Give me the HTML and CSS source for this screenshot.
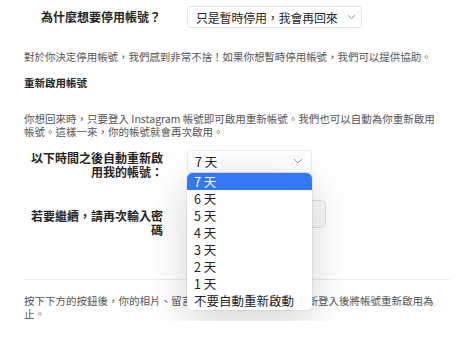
FILE: index.html
```html
<!DOCTYPE html>
<html lang="zh-TW">
<head>
    <meta charset="utf-8">
    <title>停用帳號</title>
    <link rel="stylesheet" href="styles.css">
</head>
<body>

<div class="deactivate">

    <div class="deactivate-row deactivate-row-reason">
        <label class="deactivate-label">為什麼想要停用帳號？</label>
        <div class="deactivate-select deactivate-select-reason">
            <span>只是暫時停用，我會再回來</span>
            <svg class="deactivate-chevron" width="9" height="6" viewBox="0 0 9 6"><path d="M1 1.2l3.5 3.4L8 1.2" fill="none" stroke="#8e8e8e" stroke-width="1"/></svg>
        </div>
    </div>

    <p class="deactivate-text deactivate-sorry">對於你決定停用帳號，我們感到非常不捨！如果你想暫時停用帳號，我們可以提供協助。</p>

    <h3 class="deactivate-heading">重新啟用帳號</h3>

    <p class="deactivate-text deactivate-info">你想回來時，只要登入 Instagram 帳號即可啟用重新帳號。我們也可以自動為你重新啟用帳號。這樣一來，你的帳號就會再次啟用。</p>

    <div class="deactivate-row deactivate-row-days">
        <label class="deactivate-label">以下時間之後自動重新啟用我的帳號：</label>
        <div class="deactivate-select deactivate-select-days">
            <span>7 天</span>
            <svg class="deactivate-chevron" width="10" height="6" viewBox="0 0 10 6"><path d="M1 1l4 4 4-4" fill="none" stroke="#9a9a9a" stroke-width="1"/></svg>

            <ul class="deactivate-menu">
                <li class="deactivate-menu-selected">7 天</li>
                <li>6 天</li>
                <li>5 天</li>
                <li>4 天</li>
                <li>3 天</li>
                <li>2 天</li>
                <li>1 天</li>
                <li>不要自動重新啟動</li>
            </ul>
        </div>
    </div>

    <div class="deactivate-row deactivate-row-password">
        <label class="deactivate-label">若要繼續，請再次輸入密碼</label>
        <div class="deactivate-password"></div>
    </div>

    <hr class="deactivate-rule" />

    <p class="deactivate-text deactivate-footer">按下下方的按鈕後，你的相片、留言和讚都將隱藏，直到你重新登入後將帳號重新啟用為止。</p>

</div>

</body>
</html>
```

FILE: styles.css
```css
body {
    margin:0;
    background:#fff;
    font-family:"Noto Sans CJK TC","Noto Sans",sans-serif;
    color:#262626;
}

/* deactivate form */
.deactivate {
    padding:6px 24px 0 24px;
}

.deactivate-row {
    display:grid;
    grid-template-columns:139px auto;
    column-gap:24px;
    align-items:start;
}

.deactivate-label {
    font-size:12px;
    font-weight:bold;
    line-height:14px;
    text-align:right;
    color:#262626;
}

.deactivate-row-reason .deactivate-label {
    line-height:16px;
    padding-top:3px;
    padding-right:2px;
    white-space:nowrap;
}

.deactivate-row-days .deactivate-label {
    padding-top:1px;
}

.deactivate-row-password {
    margin-top:21px;
}

.deactivate-row-password .deactivate-label {
    padding-top:9px;
}

.deactivate-select {
    position:relative;
    display:flex;
    align-items:center;
    justify-content:space-between;
    box-sizing:border-box;
    border:1px solid #e4e4e4;
    border-radius:3px;
    background:#fff;
    font-size:12px;
    color:#262626;
}

.deactivate-select-reason {
    width:175px;
    height:22px;
    padding:0 5px 0 8px;
}

.deactivate-select-reason span {
    font-size:12px;
    letter-spacing:-0.2px;
}

.deactivate-select-days {
    width:125px;
    height:23px;
    padding:0 8px 0 7px;
    border-color:#ebebeb;
    font-size:12.5px;
}

.deactivate-chevron {
    display:block;
    flex:none;
}

.deactivate-text {
    margin:0;
    font-size:10.5px;
    line-height:13.5px;
    color:#555;
}

.deactivate-sorry {
    margin-top:22px;
    letter-spacing:-0.05px;
}

.deactivate-heading {
    margin:12px 0 0 0;
    font-size:10.5px;
    line-height:14px;
    font-weight:bold;
    color:#262626;
}

.deactivate-info {
    margin-top:22px;
    padding-right:14px;
}

.deactivate-row-days {
    margin-top:11px;
}

.deactivate-password {
    width:139px;
    height:28px;
    box-sizing:border-box;
    border:1px solid #e2e2e2;
    border-radius:5px;
    background:#fafafa;
}

.deactivate-rule {
    margin:42px 0 0 0;
    border:0;
    border-top:1px solid #eee;
}

.deactivate-footer {
    margin-top:14px;
    padding-right:8px;
}

/* opened select menu */
.deactivate-menu {
    position:absolute;
    top:22px;
    left:-1px;
    z-index:50;
    width:125px;
    margin:0;
    padding:0 0 1px 0;
    list-style:none;
    background:#fff;
    border-radius:5px;
    box-shadow:0 10px 40px rgba(0,0,0,.18), 0 0 0 1px rgba(0,0,0,.05);
    overflow:hidden;
}

.deactivate-menu li {
    height:17px;
    line-height:17px;
    padding-left:7px;
    font-size:12.5px;
    color:#222;
    white-space:nowrap;
}

.deactivate-menu .deactivate-menu-selected {
    background:#3478f6;
    color:#fff;
    border-radius:5px 5px 0 0;
}
```
